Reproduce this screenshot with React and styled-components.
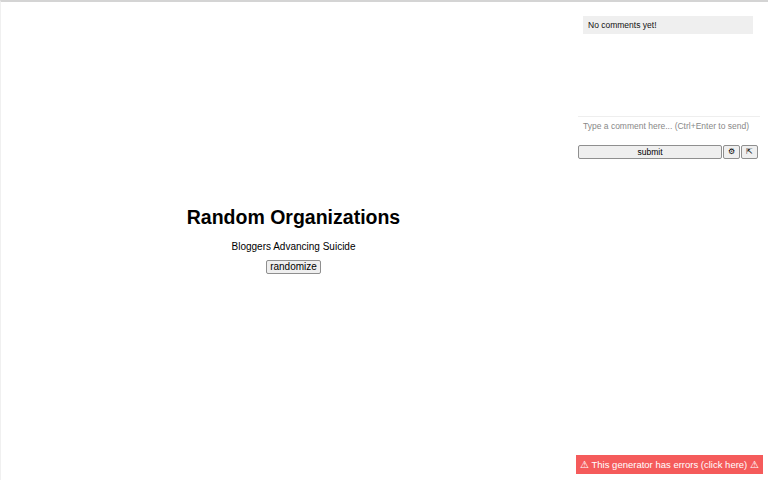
import React from 'react';
import styled, { createGlobalStyle } from 'styled-components';

const GlobalStyle = createGlobalStyle`
html, body {
    margin: 0;
    padding: 0;
    background: #fff;
    font-family: "Liberation Sans", Arial, sans-serif;
}
`;

const Page = styled.div`
height: 478px;
border-top: 2px solid #d4d4d4;
border-left: 1px solid #f0f0f0;
display: flex;
`;

const Main = styled.div`
width: 565px;
padding-left: 10px;
padding-bottom: 2px;
display: flex;
flex-direction: column;
align-items: center;
justify-content: center;
`;

const Title = styled.h1`
margin: 0;
font-size: 19.5px;
font-weight: bold;
color: #000;
`;

const Result = styled.div`
margin-top: 12px;
font-size: 10px;
color: #000;
`;

const SmallButton = styled.button`
font-family: "Liberation Sans", Arial, sans-serif;
font-size: ${({size}) => (size ? size + "px" : "10px")};
height: 14px;
padding: 0 ${({pad}) => (pad ? pad + "px" : "4px")};
border: 1px solid #8f8f8f;
border-radius: 2px;
background: #efefef;
color: #000;
line-height: 12px;
cursor: pointer;
`;

const RandomizeButton = styled(SmallButton)`
margin-top: 8px;
`;

const Side = styled.div`
flex: 1;
display: flex;
flex-direction: column;
padding: 14px 8px 0 2px;
`;

const CommentList = styled.div`
margin: 0 7px 0 5px;
height: 18px;
background: #efefef;
font-size: 8.5px;
color: #111;
padding-left: 5px;
display: flex;
align-items: center;
`;

const CommentInput = styled.textarea`
margin-top: 82px;
height: 20px;
border: none;
border-top: 1px solid #eee;
resize: none;
font-family: "Liberation Sans", Arial, sans-serif;
font-size: 8.5px;
padding: 4px 5px 0;
outline: none;
&::placeholder {
    color: #888;
}
`;

const ButtonRow = styled.div`
display: flex;
margin-top: 4px;
gap: 1px;
`;

const SubmitButton = styled(SmallButton)`
width: 144px;
font-size: 8.5px;
`;

const IconButton = styled(SmallButton)`
width: 17px;
font-size: 8px;
padding: 0;
`;

const ErrorBar = styled.div`
margin-top: auto;
margin-bottom: 6px;
margin-left: -2px;
margin-right: -3px;
height: 19px;
background: #f55b5b;
color: #fff;
font-size: 9.5px;
white-space: nowrap;
display: flex;
align-items: center;
justify-content: center;
cursor: pointer;
`;

export default function App() {
    return (
        <Page>
            <GlobalStyle />
            <Main>
                <Title>Random Organizations</Title>
                <Result>Bloggers Advancing Suicide</Result>
                <RandomizeButton size={10} pad={3}>randomize</RandomizeButton>
            </Main>
            <Side>
                <CommentList>No comments yet!</CommentList>
                <CommentInput placeholder="Type a comment here... (Ctrl+Enter to send)" />
                <ButtonRow>
                    <SubmitButton>submit</SubmitButton>
                    <IconButton>⚙</IconButton>
                    <IconButton>⇱</IconButton>
                </ButtonRow>
                <ErrorBar>⚠ This generator has errors (click here) ⚠</ErrorBar>
            </Side>
        </Page>
    );
}
